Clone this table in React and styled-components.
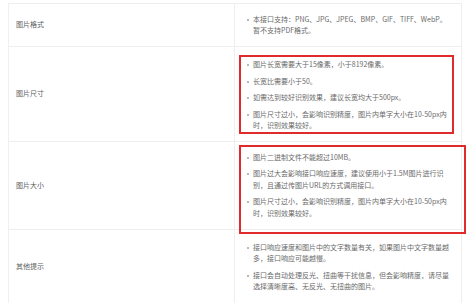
import styled, { createGlobalStyle } from "styled-components"

const GlobalStyle = createGlobalStyle`
    html, body {
        margin: 0;
        padding: 0;
        background: #fff;
    }
    body {
        font-family: "Noto Sans CJK SC", "Noto Sans", sans-serif;
        color: #555;
    }
`

const rows = [
    {
        label: '图片格式',
        h: 43,
        items: [
            ['本接口支持：PNG、JPG、JPEG、BMP、GIF、TIFF、WebP。', '暂不支持PDF格式。'],
        ],
    },
    {
        label: '图片尺寸',
        h: 95,
        shift: 3,
        mark: { top: 8, left: 4, w: 215, h: 79 },
        items: [
            ['图片长宽需要大于15像素，小于8192像素。'],
            ['长宽比需要小于50。'],
            ['如需达到较好识别效果，建议长宽均大于500px。'],
            ['图片尺寸过小，会影响识别精度，图片内单字大小在10-50px内', '时，识别效果较好。'],
        ],
    },
    {
        label: '图片大小',
        h: 88,
        mark: { top: 3, left: 4, w: 227, h: 89 },
        items: [
            ['图片二进制文件不能超过10MB。'],
            ['图片过大会影响接口响应速度，建议使用小于1.5M图片进行识', '别，且通过传图片URL的方式调用接口。'],
            ['图片尺寸过小，会影响识别精度，图片内单字大小在10-50px内', '时，识别效果较好。'],
        ],
    },
    {
        label: '其他提示',
        h: 75,
        items: [
            ['接口响应速度和图片中的文字数量有关，如果图片中文字数量越', '多，接口响应可能越慢。'],
            ['接口会自动处理反光、扭曲等干扰信息，但会影响精度，请尽量', '选择清晰度高、无反光、无扭曲的图片。'],
        ],
    },
]

export default function App() {
    return (
        <>
            <GlobalStyle />
            <Table>
                {rows.map(row => (
                    <Row key={row.label} $h={row.h}>
                        <Label>{row.label}</Label>
                        <Desc $shift={row.shift || 0}>
                            <List>
                                {row.items.map((lines, i) => (
                                    <Item key={i}>
                                        <Dot />
                                        <Text>
                                            {lines.map((line, j) => (
                                                <span key={j}>
                                                    {j > 0 && <br />}
                                                    {line}
                                                </span>
                                            ))}
                                        </Text>
                                    </Item>
                                ))}
                            </List>
                            {row.mark && (
                                <Mark
                                    $top={row.mark.top}
                                    $left={row.mark.left}
                                    $w={row.mark.w}
                                    $h={row.mark.h}
                                />
                            )}
                        </Desc>
                    </Row>
                ))}
            </Table>
        </>
    )
}

const Table = styled.div`
    margin: 3px 0 0 8px;
    width: 454px;
    box-sizing: border-box;
    border-top: 1px solid #eeeeee;
    border-left: 1px solid #f0f0f0;
    border-right: 1px solid #eeeeee;
`
const Row = styled.div`
    display: grid;
    grid-template-columns: 226px 1fr;
    min-height: ${p => p.$h}px;
    box-sizing: border-box;
    border-bottom: 1px solid #eeeeee;
`
const Label = styled.div`
    display: flex;
    align-items: center;
    padding-left: 7px;
    border-right: 1px solid #eeeeee;
    font-size: 7px;
    line-height: 11.5px;
    color: #606060;
`
const Desc = styled.div`
    position: relative;
    display: flex;
    align-items: center;
    padding: ${p => p.$shift}px 8px 0 12px;
`
const List = styled.ul`
    list-style: none;
    margin: 0;
    padding: 0;
    display: flex;
    flex-direction: column;
    gap: 5px;
`
const Item = styled.li`
    display: flex;
    align-items: flex-start;
    font-size: 7px;
    line-height: 11.5px;
    color: #6a6a6a;
    white-space: nowrap;
`
const Dot = styled.span`
    flex-shrink: 0;
    width: 2px;
    height: 2px;
    margin: 5px 4px 0 0;
    border-radius: 50%;
    background: #a0a0a0;
`
const Text = styled.span`
    display: block;
`
const Mark = styled.div`
    position: absolute;
    top: ${p => p.$top}px;
    left: ${p => p.$left}px;
    width: ${p => p.$w}px;
    height: ${p => p.$h}px;
    box-sizing: border-box;
    border: 2px solid #e12a2a;
    z-index: 2;
    pointer-events: none;
`
